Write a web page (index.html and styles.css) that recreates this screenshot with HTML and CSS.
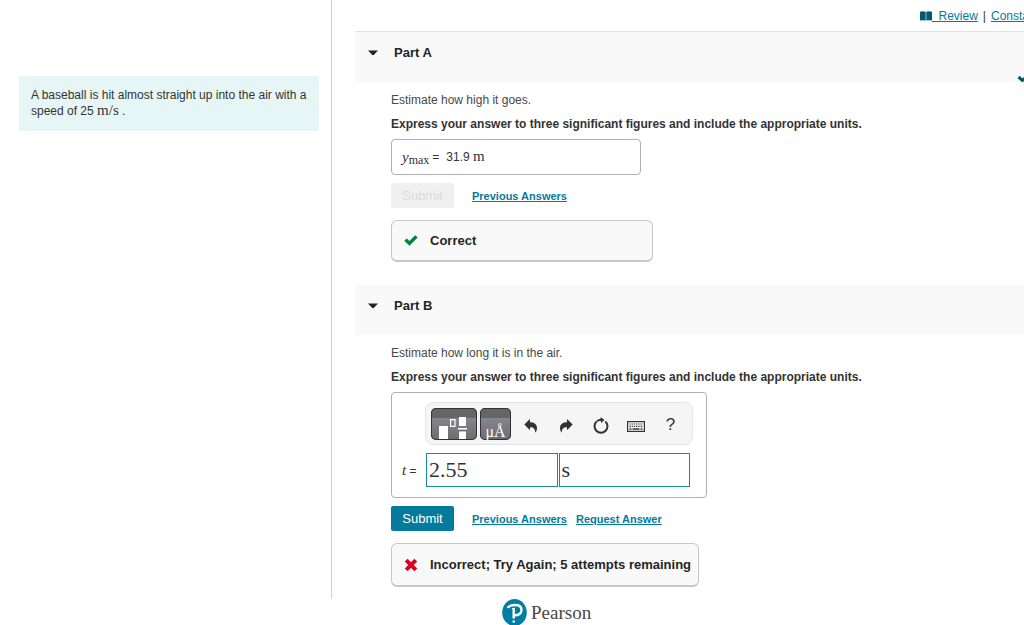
FILE: index.html
```html
<!DOCTYPE html>
<html lang="en">
<head>
<meta charset="utf-8">
<title>Physics assignment</title>
<link rel="stylesheet" href="styles.css">
</head>
<body>
<div class="page">
  <aside class="sidebar">
    <p class="problem">A baseball is hit almost straight up into the air with a speed of 25 <span class="unit">m/s</span> .</p>
  </aside>
  <main class="main">
    <nav class="topbar">
      <svg class="book" width="12" height="10" viewBox="0 0 12 10"><path d="M0 .7Q3-.2 5.700.7V9.600Q3 8.900 0 9.600ZM6.300.7Q9-.2 12 .7V9.600Q9 8.900 6.300 9.600Z" fill="#005a70"/></svg>
      <a href="#review">&nbsp; Review</a>
      <span class="divider">|</span>
      <a href="#constants">Constants</a>
    </nav>

    <section>
      <header class="part-head first">
        <button class="toggle" aria-label="Collapse Part A"><svg width="10" height="6" viewBox="0 0 10 6"><path d="M0 .5H10L6 4.700Q5 5.600 4 4.700Z" fill="#252525"/></svg></button>
        <h2>Part A</h2>
        <svg class="part-check" width="15" height="7" viewBox="0 0 15 7"><path d="M1.500 2L5.500 5.500L12-1" fill="none" stroke="#005a70" stroke-width="3"/></svg>
      </header>
      <div class="part-body">
        <p class="question">Estimate how high it goes.</p>
        <p class="instruction">Express your answer to three significant figures and include the appropriate units.</p>
        <div class="answer given"><span class="symbol"><i>y</i><sub>max</sub></span><span class="equals">=</span><span class="value">31.9 <span class="unit">m</span></span></div>
        <div class="actions">
          <button class="submit" disabled>Submit</button>
          <a href="#previous-a">Previous Answers</a>
        </div>
        <div class="feedback correct">
          <svg width="14" height="12" viewBox="0 0 14 12"><path d="M.3 5.800L2.800 3.600L5.400 6L11.200.2L13.700 2.400L5.400 10.800Z" fill="#038238"/></svg>
          <span>Correct</span>
        </div>
      </div>
    </section>

    <section>
      <header class="part-head">
        <button class="toggle" aria-label="Collapse Part B"><svg width="10" height="6" viewBox="0 0 10 6"><path d="M0 .5H10L6 4.700Q5 5.600 4 4.700Z" fill="#252525"/></svg></button>
        <h2>Part B</h2>
      </header>
      <div class="part-body">
        <p class="question">Estimate how long it is in the air.</p>
        <p class="instruction">Express your answer to three significant figures and include the appropriate units.</p>
        <div class="answer editor">
          <div class="toolbar">
            <button class="palette wide" aria-label="Templates"><svg width="46" height="32" viewBox="0 0 46 32"><path d="M8 18H17V31H8ZM28 9H35V18H28ZM27 20H36V21.500H27ZM28 23.500H35V31H28Z" fill="#fff"/><path d="M19.600 11.600H24V18.400H19.600Z" fill="none" stroke="#fff" stroke-width="1.200"/></svg></button>
            <button class="palette" aria-label="Symbols"><span>μÅ</span></button>
            <button class="tool" aria-label="Undo"><svg width="14" height="14" viewBox="0 0 14 14"><path d="M6 0V3.200C10 3.200 13 5.200 13 9C13 11 12.300 12.600 11.200 13.800C11.300 10.200 10 8.200 6 8.200V11.300L.3 5.600Z" fill="#333"/></svg></button>
            <button class="tool" aria-label="Redo"><svg width="14" height="14" viewBox="0 0 14 14"><path d="M8 0V3.200C4 3.200 1 5.200 1 9C1 11 1.700 12.600 2.800 13.800C2.700 10.200 4 8.200 8 8.200V11.300L13.700 5.600Z" fill="#333"/></svg></button>
            <button class="tool" aria-label="Reset"><svg width="16" height="17" viewBox="0 0 16 17"><path d="M3.600 4.500A6.500 6.500 0 1 0 12.400 4.500M4 4.200Q6 2.600 9 2.900" fill="none" stroke="#333" stroke-width="2"/><path d="M7.500 0L11.500 3L8 6Z" fill="#333"/></svg></button>
            <button class="tool" aria-label="Keyboard"><svg class="keys" width="18" height="11" viewBox="0 0 18 11"><rect x=".6" y=".6" width="16.800" height="9.800" fill="none" stroke="#333" stroke-width="1.200"/><path d="M2.500 3H16M2.500 5.300H16" stroke="#333" stroke-width="1.200" stroke-dasharray="1.300 .9"/><path d="M2.500 8H4.500M5.500 8H12.500M13.500 8H15.500" stroke="#333" stroke-width="1.300"/></svg></button>
            <button class="tool help" aria-label="Help">?</button>
          </div>
          <div class="entry">
            <label for="value"><i>t</i> =</label>
            <input id="value" type="text" value="2.55">
            <input type="text" value="s" aria-label="Units">
          </div>
        </div>
        <div class="actions">
          <button class="submit">Submit</button>
          <a href="#previous-b">Previous Answers</a>
          <a href="#request">Request Answer</a>
        </div>
        <div class="feedback incorrect">
          <svg width="14" height="14" viewBox="0 0 14 14"><path d="M2.200 2.200L11.800 11.800M11.800 2.200L2.200 11.800" stroke="#db0020" stroke-width="4"/></svg>
          <span>Incorrect; Try Again; 5 attempts remaining</span>
        </div>
      </div>
    </section>
  </main>
</div>
<footer class="footer">
  <svg width="25" height="28" viewBox="0 0 25 28"><ellipse cx="12.500" cy="13.500" rx="12.300" ry="13.500" fill="#007fa3"/><path d="M5.500 8.800C9 5 19.500 4.500 19.500 11C19.500 14.500 16.500 16.300 13 16.300" fill="none" stroke="#fff" stroke-width="2.400"/><path d="M9.500 9.200L12.900 8.800V19.500H10.500V10.500Z" fill="#fff"/><circle cx="11.700" cy="22.500" r="1.300" fill="#fff"/></svg>
  <span>Pearson</span>
</footer>
</body>
</html>
```
FILE: styles.css
```css
* { box-sizing: border-box; }
html { overflow: hidden; }
body {
  margin: 0;
  background: #fff;
  color: #333;
  font: 12px/16px "Liberation Sans", Arial, sans-serif;
}
p, h2 { margin: 0; }
button, input { font: inherit; color: inherit; border: 0; padding: 0; }
svg { display: block; flex: none; }
a { color: #047a9c; }

.page {
  display: flex;
  width: calc(100% + 21px);
}
.sidebar {
  width: 332px;
  flex: none;
  padding: 76px 12px 0 19px;
  border-right: 1px solid #c9d2da;
}
.problem {
  padding: 12px;
  background: #e6f6f7;
  line-height: 15px;
}
.unit { font-family: "Liberation Serif", serif; font-size: 15px; line-height: 14px; }
.main {
  flex: 1;
  min-width: 0;
  padding: 0 0 12px 23px;
}
.topbar {
  display: flex;
  justify-content: flex-end;
  align-items: center;
  gap: 5px;
  height: 31px;
}
.book { margin-right: -5px; }

.part-head {
  position: relative;
  display: flex;
  gap: 16px;
  height: 50px;
  padding: 13px 0 0 13px;
  background: #f9f9f9;
}
.part-head.first {
  height: 51px;
  border-top: 1px solid #e3e3e3;
}
.part-head h2 { font-size: 13px; line-height: 16px; color: #252525; }
.toggle { display: flex; align-items: center; height: 16px; background: none; }
.part-check { position: absolute; right: 13px; bottom: 0; }
.part-body { padding: 10px 0 0 36px; }
section + section { margin-top: 23px; }
.question { margin-bottom: 8px; color: #484848; }
.instruction { margin-bottom: 7px; font-weight: bold; }

.answer {
  border: 1px solid #b0b0b0;
  border-radius: 4px;
}
.given {
  display: flex;
  align-items: center;
  width: 250px;
  height: 36px;
  padding: 0 10px;
}
.symbol { font: 15px/16px "Liberation Serif", serif; }
.symbol sub { font-size: 12px; line-height: 12px; vertical-align: -2px; }
.equals { margin: 0 7px 0 3px; }

.actions {
  display: flex;
  align-items: center;
  gap: 9px;
  margin: 8px 0 12px;
}
.actions a { font-size: 11px; font-weight: bold; }
.submit {
  width: 63px;
  height: 25px;
  margin-right: 9px;
  border-radius: 2px;
  background: #047a9c;
  color: #fff;
  font-size: 13px;
}
.submit:disabled { background: #f0f0f0; color: #dcdcdc; }

.feedback {
  display: flex;
  align-items: center;
  gap: 12px;
  padding: 0 0 0 12px;
  border: 1px solid #c7c7c7;
  border-bottom-width: 2px;
  border-radius: 6px;
  background: #f9f9f9;
  color: #252525;
  font-size: 13px;
  font-weight: bold;
  white-space: nowrap;
}
.correct { width: 262px; height: 42px; }
.incorrect { width: 308px; height: 44px; }

.editor { width: 316px; padding: 9px 13px 10px 10px; }
.toolbar {
  display: flex;
  align-items: center;
  width: 268px;
  height: 43px;
  margin: 0 0 8px 23px;
  padding: 0 4px 0 5px;
  border: 1px solid #e4e4e4;
  border-radius: 8px;
  background: #f5f5f5;
}
.palette {
  width: 31px;
  height: 32px;
  margin-right: 3px;
  overflow: hidden;
  border-radius: 5px;
  background: linear-gradient(#666 0, #666 30%, #85858c 31%, #6c6c70 100%);
  box-shadow: inset 0 0 0 1px #333;
  color: #fff;
  font: 16px/16px "Liberation Serif", serif;
}
.palette.wide { width: 46px; }
.palette span { display: block; padding-top: 16px; }
.tool {
  display: flex;
  flex: 1;
  justify-content: center;
  padding-top: 4px;
  background: none;
}
.help { padding-top: 2px; font-size: 17px; }
.keys { margin-top: 2px; }
.entry { display: flex; align-items: center; padding-right: 3px; }
.entry label { width: 24px; font-size: 12px; }
.entry i { font: italic 15px/16px "Liberation Serif", serif; }
.entry input {
  flex: 1;
  min-width: 0;
  height: 34px;
  padding: 0 2px;
  border: 1px solid #1886a5;
  background: #fff;
  font: 22px/30px "Liberation Serif", serif;
}
.entry input + input { margin-left: 1px; }

.footer {
  display: flex;
  align-items: center;
  gap: 4px;
  padding-left: 502px;
  color: #4a4542;
  font: 19px/26px "Liberation Serif", serif;
}
```
